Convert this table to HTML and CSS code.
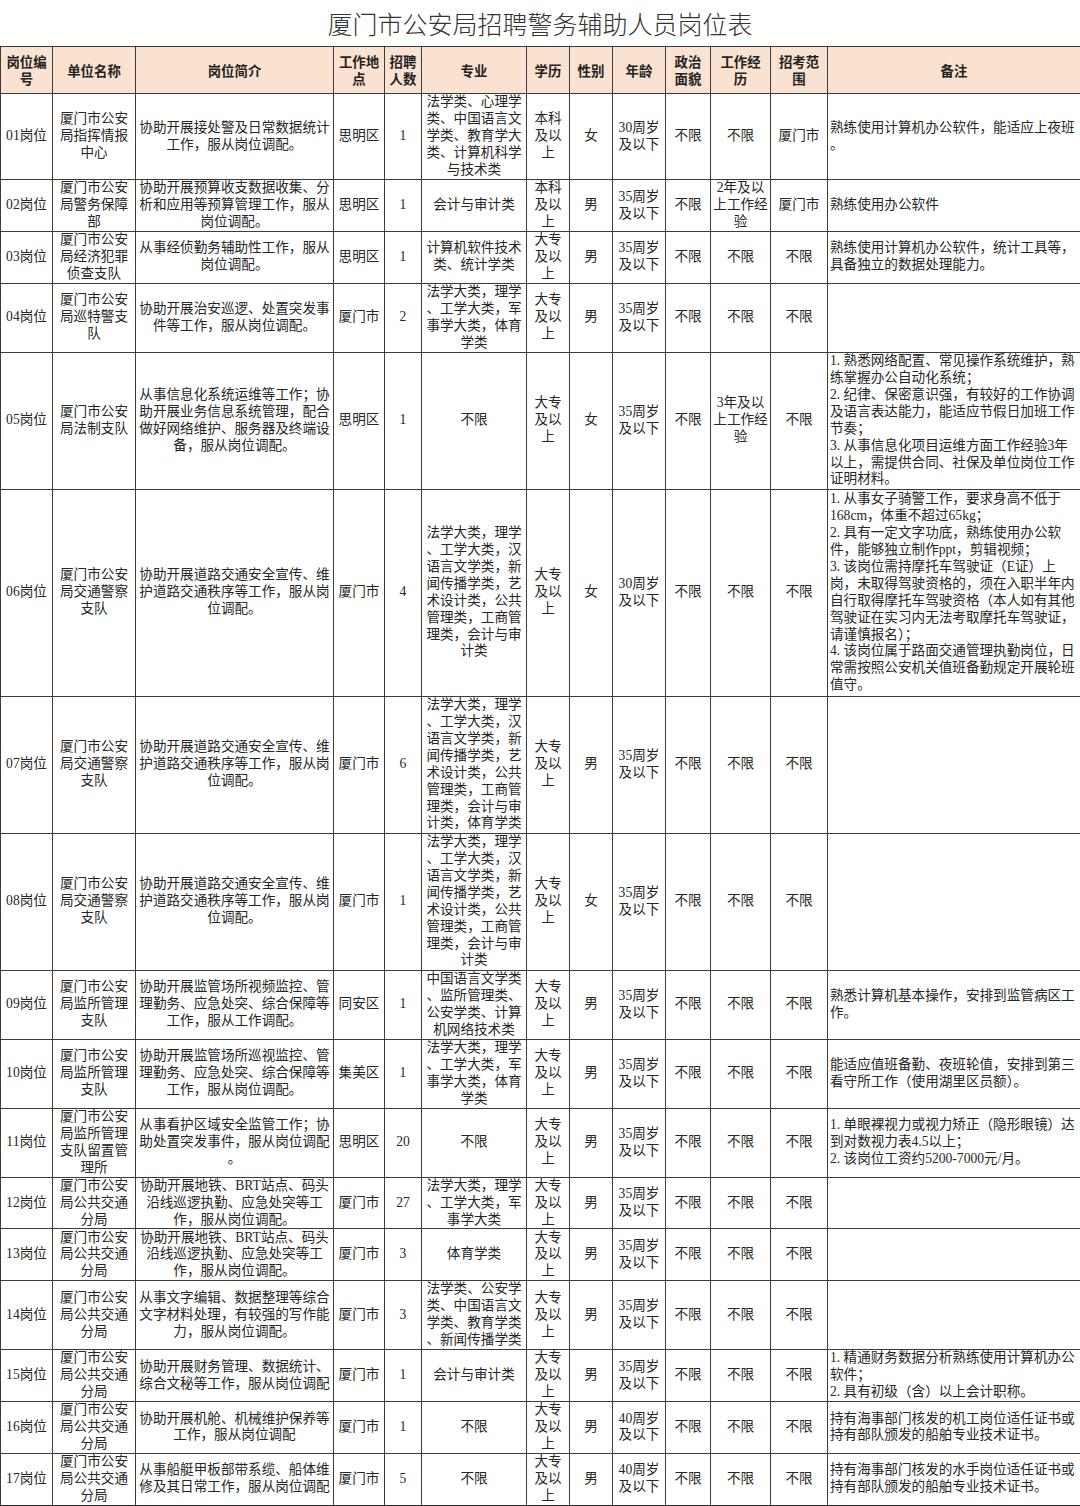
FILE: index.html
```html
<!DOCTYPE html>
<html lang="zh-CN">
<head>
<meta charset="utf-8">
<title>厦门市公安局招聘警务辅助人员岗位表</title>
<link rel="stylesheet" href="styles.css">
</head>
<body>
<div class="page">
  <h1 class="title">厦门市公安局招聘警务辅助人员岗位表</h1>
  <table class="grid">
    <colgroup>
      <col class="c-id"><col class="c-unit"><col class="c-desc"><col class="c-loc"><col class="c-num"><col class="c-major"><col class="c-edu"><col class="c-sex"><col class="c-age"><col class="c-pol"><col class="c-exp"><col class="c-scope"><col class="c-note">
    </colgroup>
    <thead>
      <tr class="h47">
        <th>岗位编<br>号</th><th>单位名称</th><th>岗位简介</th><th>工作地<br>点</th><th>招聘<br>人数</th><th>专业</th><th>学历</th><th>性别</th><th>年龄</th><th>政治<br>面貌</th><th>工作经<br>历</th><th>招考范<br>围</th><th>备注</th>
      </tr>
    </thead>
    <tbody>
      <tr class="h86">
        <td>01岗位</td><td>厦门市公安<br>局指挥情报<br>中心</td><td>协助开展接处警及日常数据统计<br>工作，服从岗位调配。</td><td>思明区</td><td>1</td><td>法学类、心理学<br>类、中国语言文<br>学类、教育学大<br>类、计算机科学<br>与技术类</td><td>本科<br>及以<br>上</td><td>女</td><td>30周岁<br>及以下</td><td>不限</td><td>不限</td><td>厦门市</td><td class="note">熟练使用计算机办公软件，能适应上夜班<br>。</td>
      </tr>
      <tr class="h52">
        <td>02岗位</td><td>厦门市公安<br>局警务保障<br>部</td><td>协助开展预算收支数据收集、分<br>析和应用等预算管理工作，服从<br>岗位调配。</td><td>思明区</td><td>1</td><td>会计与审计类</td><td>本科<br>及以<br>上</td><td>男</td><td>35周岁<br>及以下</td><td>不限</td><td>2年及以<br>上工作经<br>验</td><td>厦门市</td><td class="note">熟练使用办公软件</td>
      </tr>
      <tr class="h51">
        <td>03岗位</td><td>厦门市公安<br>局经济犯罪<br>侦查支队</td><td>从事经侦勤务辅助性工作，服从<br>岗位调配。</td><td>思明区</td><td>1</td><td>计算机软件技术<br>类、统计学类</td><td>大专<br>及以<br>上</td><td>男</td><td>35周岁<br>及以下</td><td>不限</td><td>不限</td><td>不限</td><td class="note">熟练使用计算机办公软件，统计工具等，<br>具备独立的数据处理能力。</td>
      </tr>
      <tr class="h69">
        <td>04岗位</td><td>厦门市公安<br>局巡特警支<br>队</td><td>协助开展治安巡逻、处置突发事<br>件等工作，服从岗位调配。</td><td>厦门市</td><td>2</td><td>法学大类，理学<br>、工学大类，军<br>事学大类，体育<br>学类</td><td>大专<br>及以<br>上</td><td>男</td><td>35周岁<br>及以下</td><td>不限</td><td>不限</td><td>不限</td><td class="note"></td>
      </tr>
      <tr class="h137">
        <td>05岗位</td><td>厦门市公安<br>局法制支队</td><td>从事信息化系统运维等工作；协<br>助开展业务信息系统管理，配合<br>做好网络维护、服务器及终端设<br>备，服从岗位调配。</td><td>思明区</td><td>1</td><td>不限</td><td>大专<br>及以<br>上</td><td>女</td><td>35周岁<br>及以下</td><td>不限</td><td>3年及以<br>上工作经<br>验</td><td>不限</td><td class="note">1. 熟悉网络配置、常见操作系统维护，熟<br>练掌握办公自动化系统；<br>2. 纪律、保密意识强，有较好的工作协调<br>及语言表达能力，能适应节假日加班工作<br>节奏；<br>3. 从事信息化项目运维方面工作经验3年<br>以上，需提供合同、社保及单位岗位工作<br>证明材料。</td>
      </tr>
      <tr class="h207">
        <td>06岗位</td><td>厦门市公安<br>局交通警察<br>支队</td><td>协助开展道路交通安全宣传、维<br>护道路交通秩序等工作，服从岗<br>位调配。</td><td>厦门市</td><td>4</td><td>法学大类，理学<br>、工学大类，汉<br>语言文学类，新<br>闻传播学类，艺<br>术设计类，公共<br>管理类，工商管<br>理类，会计与审<br>计类</td><td>大专<br>及以<br>上</td><td>女</td><td>30周岁<br>及以下</td><td>不限</td><td>不限</td><td>不限</td><td class="note">1. 从事女子骑警工作，要求身高不低于<br>168cm，体重不超过65kg；<br>2. 具有一定文字功底，熟练使用办公软<br>件，能够独立制作ppt，剪辑视频；<br>3. 该岗位需持摩托车驾驶证（E证）上<br>岗，未取得驾驶资格的，须在入职半年内<br>自行取得摩托车驾驶资格（本人如有其他<br>驾驶证在实习内无法考取摩托车驾驶证，<br>请谨慎报名）；<br>4. 该岗位属于路面交通管理执勤岗位，日<br>常需按照公安机关值班备勤规定开展轮班<br>值守。</td>
      </tr>
      <tr class="h137">
        <td>07岗位</td><td>厦门市公安<br>局交通警察<br>支队</td><td>协助开展道路交通安全宣传、维<br>护道路交通秩序等工作，服从岗<br>位调配。</td><td>厦门市</td><td>6</td><td>法学大类，理学<br>、工学大类，汉<br>语言文学类，新<br>闻传播学类，艺<br>术设计类，公共<br>管理类，工商管<br>理类，会计与审<br>计类，体育学类</td><td>大专<br>及以<br>上</td><td>男</td><td>35周岁<br>及以下</td><td>不限</td><td>不限</td><td>不限</td><td class="note"></td>
      </tr>
      <tr class="h137">
        <td>08岗位</td><td>厦门市公安<br>局交通警察<br>支队</td><td>协助开展道路交通安全宣传、维<br>护道路交通秩序等工作，服从岗<br>位调配。</td><td>厦门市</td><td>1</td><td>法学大类，理学<br>、工学大类，汉<br>语言文学类，新<br>闻传播学类，艺<br>术设计类，公共<br>管理类，工商管<br>理类，会计与审<br>计类</td><td>大专<br>及以<br>上</td><td>女</td><td>35周岁<br>及以下</td><td>不限</td><td>不限</td><td>不限</td><td class="note"></td>
      </tr>
      <tr class="h69">
        <td>09岗位</td><td>厦门市公安<br>局监所管理<br>支队</td><td>协助开展监管场所视频监控、管<br>理勤务、应急处突、综合保障等<br>工作，服从工作调配。</td><td>同安区</td><td>1</td><td>中国语言文学类<br>、监所管理类、<br>公安学类、计算<br>机网络技术类</td><td>大专<br>及以<br>上</td><td>男</td><td>35周岁<br>及以下</td><td>不限</td><td>不限</td><td>不限</td><td class="note">熟悉计算机基本操作，安排到监管病区工<br>作。</td>
      </tr>
      <tr class="h69">
        <td>10岗位</td><td>厦门市公安<br>局监所管理<br>支队</td><td>协助开展监管场所巡视监控、管<br>理勤务、应急处突、综合保障等<br>工作，服从岗位调配。</td><td>集美区</td><td>1</td><td>法学大类，理学<br>、工学大类，军<br>事学大类，体育<br>学类</td><td>大专<br>及以<br>上</td><td>男</td><td>35周岁<br>及以下</td><td>不限</td><td>不限</td><td>不限</td><td class="note">能适应值班备勤、夜班轮值，安排到第三<br>看守所工作（使用湖里区员额）。</td>
      </tr>
      <tr class="h69">
        <td>11岗位</td><td>厦门市公安<br>局监所管理<br>支队留置管<br>理所</td><td>从事看护区域安全监管工作；协<br>助处置突发事件，服从岗位调配<br>。</td><td>思明区</td><td>20</td><td>不限</td><td>大专<br>及以<br>上</td><td>男</td><td>35周岁<br>及以下</td><td>不限</td><td>不限</td><td>不限</td><td class="note">1. 单眼裸视力或视力矫正（隐形眼镜）达<br>到对数视力表4.5以上；<br>2. 该岗位工资约5200-7000元/月。</td>
      </tr>
      <tr class="h51">
        <td>12岗位</td><td>厦门市公安<br>局公共交通<br>分局</td><td>协助开展地铁、BRT站点、码头<br>沿线巡逻执勤、应急处突等工<br>作，服从岗位调配。</td><td>厦门市</td><td>27</td><td>法学大类，理学<br>、工学大类，军<br>事学大类</td><td>大专<br>及以<br>上</td><td>男</td><td>35周岁<br>及以下</td><td>不限</td><td>不限</td><td>不限</td><td class="note"></td>
      </tr>
      <tr class="h52">
        <td>13岗位</td><td>厦门市公安<br>局公共交通<br>分局</td><td>协助开展地铁、BRT站点、码头<br>沿线巡逻执勤、应急处突等工<br>作，服从岗位调配。</td><td>厦门市</td><td>3</td><td>体育学类</td><td>大专<br>及以<br>上</td><td>男</td><td>35周岁<br>及以下</td><td>不限</td><td>不限</td><td>不限</td><td class="note"></td>
      </tr>
      <tr class="h68">
        <td>14岗位</td><td>厦门市公安<br>局公共交通<br>分局</td><td>从事文字编辑、数据整理等综合<br>文字材料处理，有较强的写作能<br>力，服从岗位调配。</td><td>厦门市</td><td>3</td><td>法学类、公安学<br>类、中国语言文<br>学类、教育学类<br>、新闻传播学类</td><td>大专<br>及以<br>上</td><td>男</td><td>35周岁<br>及以下</td><td>不限</td><td>不限</td><td>不限</td><td class="note"></td>
      </tr>
      <tr class="h52">
        <td>15岗位</td><td>厦门市公安<br>局公共交通<br>分局</td><td>协助开展财务管理、数据统计、<br>综合文秘等工作，服从岗位调配</td><td>厦门市</td><td>1</td><td>会计与审计类</td><td>大专<br>及以<br>上</td><td>男</td><td>35周岁<br>及以下</td><td>不限</td><td>不限</td><td>不限</td><td class="note">1. 精通财务数据分析熟练使用计算机办公<br>软件；<br>2. 具有初级（含）以上会计职称。</td>
      </tr>
      <tr class="h51">
        <td>16岗位</td><td>厦门市公安<br>局公共交通<br>分局</td><td>协助开展机舱、机械维护保养等<br>工作，服从岗位调配</td><td>厦门市</td><td>1</td><td>不限</td><td>大专<br>及以<br>上</td><td>男</td><td>40周岁<br>及以下</td><td>不限</td><td>不限</td><td>不限</td><td class="note">持有海事部门核发的机工岗位适任证书或<br>持有部队颁发的船舶专业技术证书。</td>
      </tr>
      <tr class="h51 last">
        <td>17岗位</td><td>厦门市公安<br>局公共交通<br>分局</td><td>从事船艇甲板部带系缆、船体维<br>修及其日常工作，服从岗位调配</td><td>厦门市</td><td>5</td><td>不限</td><td>大专<br>及以<br>上</td><td>男</td><td>40周岁<br>及以下</td><td>不限</td><td>不限</td><td>不限</td><td class="note">持有海事部门核发的水手岗位适任证书或<br>持有部队颁发的船舶专业技术证书。</td>
      </tr>
    </tbody>
  </table>
</div>
</body>
</html>
```
FILE: styles.css
```css
html, body {
  margin: 0;
  padding: 0;
  background: #ffffff;
}

.page {
  width: 1080px;
  font-family: "Liberation Serif", "Noto Sans CJK SC", serif;
  color: #262626;
}

.title {
  margin: 0;
  height: 46px;
  line-height: 46px;
  text-align: center;
  font-family: "Noto Sans CJK SC", sans-serif;
  font-weight: 300;
  font-size: 25px;
  color: #333333;
}

.grid {
  width: 1080px;
  table-layout: fixed;
  border-collapse: collapse;
  font-size: 13.6px;
  line-height: 16.9px;
}

.c-id { width: 52px; }
.c-unit { width: 83px; }
.c-desc { width: 198px; }
.c-loc { width: 51px; }
.c-num { width: 37px; }
.c-major { width: 105px; }
.c-edu { width: 43px; }
.c-sex { width: 43px; }
.c-age { width: 53px; }
.c-pol { width: 45px; }
.c-exp { width: 60px; }
.c-scope { width: 57px; }
.c-note { width: 253px; }

.grid th,
.grid td {
  border: 1px solid #3c3c3c;
  padding: 0;
  text-align: center;
  vertical-align: middle;
  white-space: nowrap;
  overflow: hidden;
}

.grid th {
  background: #f9e2cf;
  font-family: "Noto Sans CJK SC", sans-serif;
  font-weight: 700;
  font-size: 13.4px;
  line-height: 17px;
  color: #222222;
}

.grid td.note {
  text-align: left;
  padding-left: 2px;
}

.h47 { height: 47px; }
.h51 { height: 51px; }
.h52 { height: 52px; }
.h68 { height: 68px; }
.h69 { height: 69px; }
.h86 { height: 86px; }
.h137 { height: 137px; }
.h207 { height: 207px; }

.last td {
  border-bottom: 3px solid #2a2a2a;
}
```
